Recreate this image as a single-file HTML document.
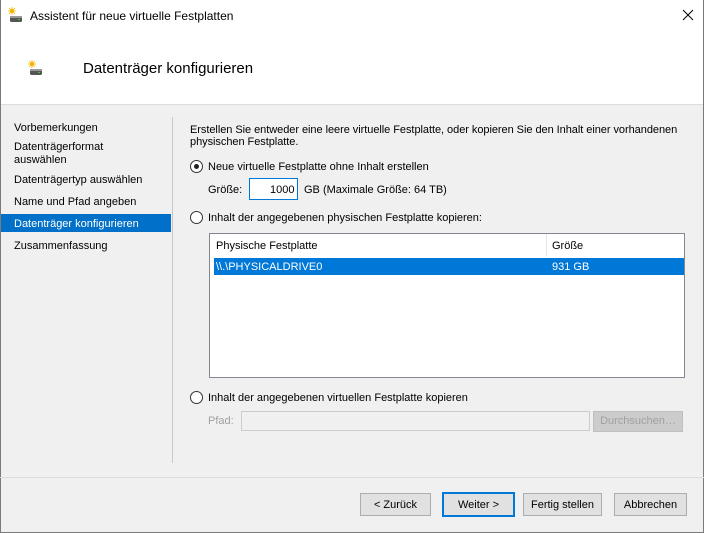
<html><head><style>
body{margin:0;width:704px;height:533px;overflow:hidden;font-family:"Liberation Sans",sans-serif;font-size:11px;color:#000;position:relative;background:#f0f0f0}
.a{position:absolute;white-space:nowrap}
.btn{position:absolute;top:493px;height:21px;border:1px solid #adadad;background:#e1e1e1;text-align:center;line-height:22px;font-size:11px}
.rad{position:absolute;width:11px;height:11px;border:1px solid #333;border-radius:50%;background:#fff}
</style></head><body>
<div class="a" style="left:0;top:0;width:704px;height:104px;background:#fff"></div>
<div class="a" style="left:0;top:104px;width:704px;height:1px;background:#dcdcdc"></div>
<div class="a" style="left:0;top:0;width:1px;height:533px;background:#7a7a7a"></div>
<div class="a" style="left:703px;top:0;width:1px;height:533px;background:#7a7a7a"></div>
<div class="a" style="left:0;top:532px;width:704px;height:1px;background:#7a7a7a"></div>
<svg class="a" style="left:8px;top:7px" width="16" height="16"><circle cx="4" cy="4" r="2.2" fill="#f2b705"/><path d="M4 0v8M0 4h8M1 1l6 6M7 1l-6 6" stroke="#f2b705" stroke-width="0.8"/><rect x="2" y="9" width="12" height="6" rx="1.5" fill="#555"/><rect x="2" y="9" width="12" height="2" fill="#999"/><rect x="10" y="12" width="2" height="1" fill="#3c3"/></svg>
<div class="a" style="left:30px;top:9px;font-size:12px">Assistent für neue virtuelle Festplatten</div>
<svg class="a" style="left:682px;top:9px" width="12" height="12"><path d="M1 1L11 11M11 1L1 11" stroke="#000" stroke-width="1"/></svg>
<svg class="a" style="left:28px;top:60px" width="16" height="16"><circle cx="4" cy="4" r="2.2" fill="#f2b705"/><path d="M4 0v8M0 4h8M1 1l6 6M7 1l-6 6" stroke="#f2b705" stroke-width="0.8"/><rect x="2" y="9" width="12" height="6" rx="1.5" fill="#555"/><rect x="2" y="9" width="12" height="2" fill="#999"/><rect x="10" y="12" width="2" height="1" fill="#3c3"/></svg>
<div class="a" style="left:83px;top:60px;font-size:15px">Datenträger konfigurieren</div>

<div class="a" style="left:14px;top:122px">Vorbemerkungen</div>
<div class="a" style="left:14px;top:141px;line-height:13px">Datenträgerformat<br>auswählen</div>
<div class="a" style="left:14px;top:174px">Datenträgertyp auswählen</div>
<div class="a" style="left:14px;top:196px">Name und Pfad angeben</div>
<div class="a" style="left:1px;top:214px;width:170px;height:18px;background:#0070c8"></div>
<div class="a" style="left:14px;top:218px;color:#fff">Datenträger konfigurieren</div>
<div class="a" style="left:14px;top:240px">Zusammenfassung</div>
<div class="a" style="left:172px;top:117px;width:1px;height:346px;background:#c8c8c8"></div>

<div class="a" style="left:190px;top:124px;line-height:12px;letter-spacing:-0.05px">Erstellen Sie entweder eine leere virtuelle Festplatte, oder kopieren Sie den Inhalt einer vorhandenen<br>physischen Festplatte.</div>
<div class="rad" style="left:190px;top:160px"></div><div class="a" style="left:194px;top:164px;width:5px;height:5px;border-radius:50%;background:#222"></div>
<div class="a" style="left:208px;top:161px">Neue virtuelle Festplatte ohne Inhalt erstellen</div>
<div class="a" style="left:208px;top:184px">Größe:</div>
<div class="a" style="left:249px;top:178px;width:47px;height:20px;border:1px solid #0078d7;background:#fff"></div>
<div class="a" style="left:270px;top:184px">1000</div>
<div class="a" style="left:304px;top:184px">GB (Maximale Größe: 64 TB)</div>
<div class="rad" style="left:190px;top:211px"></div>
<div class="a" style="left:208px;top:212px">Inhalt der angegebenen physischen Festplatte kopieren:</div>
<div class="a" style="left:209px;top:233px;width:474px;height:143px;border:1px solid #828790;background:#fff"></div>
<div class="a" style="left:546px;top:234px;width:1px;height:22px;background:#e5e5e5"></div>
<div class="a" style="left:216px;top:240px">Physische Festplatte</div>
<div class="a" style="left:552px;top:240px">Größe</div>
<div class="a" style="left:214px;top:258px;width:470px;height:17px;background:#0078d7"></div>
<div class="a" style="left:216px;top:261px;color:#fff">\\.\PHYSICALDRIVE0</div>
<div class="a" style="left:552px;top:261px;color:#fff">931 GB</div>
<div class="rad" style="left:190px;top:391px"></div>
<div class="a" style="left:208px;top:392px">Inhalt der angegebenen virtuellen Festplatte kopieren</div>
<div class="a" style="left:208px;top:415px;color:#a0a0a0">Pfad:</div>
<div class="a" style="left:241px;top:411px;width:347px;height:18px;border:1px solid #ccc;background:#f0f0f0"></div>
<div class="a" style="left:593px;top:411px;width:88px;height:19px;border:1px solid #bfbfbf;background:#ccc;color:#a0a0a0;text-align:center;line-height:19px">Durchsuchen…</div>
<div class="a" style="left:0;top:477px;width:704px;height:1px;background:#dcdcdc"></div>
<div class="btn" style="left:360px;width:69px">&lt; Zurück</div>
<div class="btn" style="left:442px;width:69px;border:2px solid #0078d7;top:492px">Weiter &gt;</div>
<div class="btn" style="left:523px;width:77px">Fertig stellen</div>
<div class="btn" style="left:614px;width:71px">Abbrechen</div>
</body></html>
